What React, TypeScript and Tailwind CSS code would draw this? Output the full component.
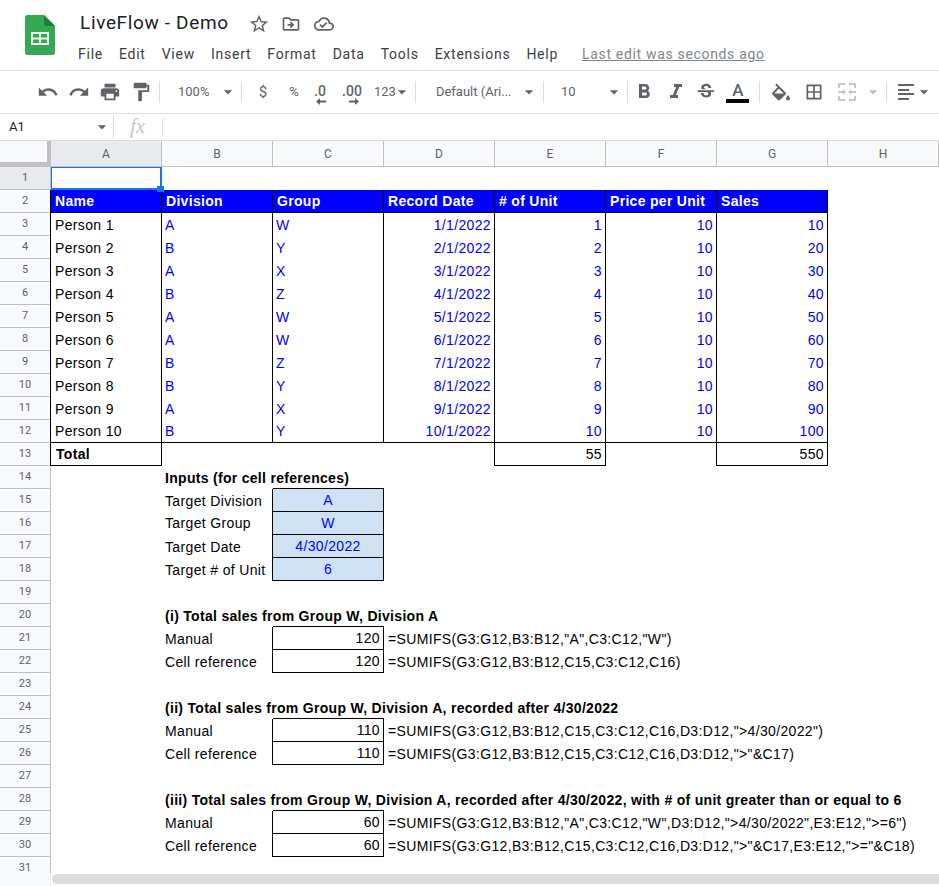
import React from "react";
import clsx from "clsx";
import {
  MdArrowDropDown,
  MdFormatBold,
  MdFormatItalic,
  MdFormatPaint,
  MdOutlineCloudDone,
  MdOutlineDriveFileMove,
  MdPrint,
  MdRedo,
  MdStarBorder,
  MdStrikethroughS,
  MdUndo,
} from "react-icons/md";

type CellSpec = { t?: string; c?: string; bold?: boolean; flat?: boolean } | null;

const menus = ["File", "Edit", "View", "Insert", "Format", "Data", "Tools", "Extensions", "Help"];
const cols = ["A", "B", "C", "D", "E", "F", "G", "H"];

const box = "border-r border-b border-black";
const right = "justify-end pr-[3px]";
const center = "justify-center";
const blue = "text-[#0000ff]";

const people: [string, string, string, string, string, string, string][] = [
  ["Person 1", "A", "W", "1/1/2022", "1", "10", "10"],
  ["Person 2", "B", "Y", "2/1/2022", "2", "10", "20"],
  ["Person 3", "A", "X", "3/1/2022", "3", "10", "30"],
  ["Person 4", "B", "Z", "4/1/2022", "4", "10", "40"],
  ["Person 5", "A", "W", "5/1/2022", "5", "10", "50"],
  ["Person 6", "A", "W", "6/1/2022", "6", "10", "60"],
  ["Person 7", "B", "Z", "7/1/2022", "7", "10", "70"],
  ["Person 8", "B", "Y", "8/1/2022", "8", "10", "80"],
  ["Person 9", "A", "X", "9/1/2022", "9", "10", "90"],
  ["Person 10", "B", "Y", "10/1/2022", "10", "10", "100"],
];

const head = (t: string, extra?: string): CellSpec => ({
  t,
  bold: true,
  c: clsx("border-r border-b border-black bg-[#0000ff] pl-1 text-white", extra),
});

const personRow = (p: string[], i: number): CellSpec[] => {
  const edge = i === 9 ? "border-b border-black" : "";
  return [
    { t: p[0], c: clsx("border-r border-black pl-1 shadow-[-1px_0_0_#000]", edge) },
    { t: p[1], c: clsx("border-r border-black pl-[3px]", blue, edge) },
    { t: p[2], c: clsx("border-r border-black pl-[3px]", blue, edge) },
    { t: p[3], c: clsx("border-r border-black", right, blue, edge) },
    { t: p[4], c: clsx("border-r border-black", right, blue, edge) },
    { t: p[5], c: clsx("border-r border-black", right, blue, edge) },
    { t: p[6], c: clsx("border-r border-black", right, blue, edge) },
    null,
  ];
};

const title = (t: string): CellSpec[] => [
  null,
  { t, bold: true, c: "pl-[3px]" },
  { c: "border-b border-black" },
  null,
  null,
  null,
  null,
  null,
];

const calc = (name: string, v: string, f: string): CellSpec[] => [
  null,
  { t: name, c: "border-r border-black pl-[3px]" },
  { t: v, c: clsx(box, right) },
  { t: f, c: "pl-1" },
  null,
  null,
  null,
  null,
];

const input = (name: string, v: string, flat = false): CellSpec[] => [
  null,
  { t: name, flat, c: "border-r border-black pl-[3px]" },
  { t: v, flat, c: clsx(box, center, blue, "bg-[#cfe2f3]") },
  null,
  null,
  null,
  null,
  null,
];

const empty: CellSpec[] = [null, null, null, null, null, null, null, null];

const rows: CellSpec[][] = [
  [
    { c: "relative z-10 border-t border-r-2 border-b-2 border-l border-[#1a73e8]" },
    null,
    null,
    null,
    null,
    null,
    null,
    null,
  ],
  [
    head("Name", "shadow-[-1px_0_0_#000]"),
    head("Division"),
    head("Group"),
    head("Record Date"),
    head("# of Unit"),
    head("Price per Unit"),
    head("Sales"),
    null,
  ],
  ...people.map(personRow),
  [
    { t: "Total", bold: true, c: clsx(box, "pl-[5px] shadow-[-1px_0_0_#000]") },
    null,
    null,
    { c: "border-r border-black" },
    { t: "55", c: clsx(box, right) },
    { c: "border-r border-black" },
    { t: "550", c: clsx(box, right) },
    null,
  ],
  title("Inputs (for cell references)"),
  input("Target Division", "A"),
  input("Target Group", "W", true),
  input("Target Date", "4/30/2022"),
  input("Target # of Unit", "6"),
  empty,
  title("(i) Total sales from Group W, Division A"),
  calc("Manual", "120", '=SUMIFS(G3:G12,B3:B12,"A",C3:C12,"W")'),
  calc("Cell reference", "120", "=SUMIFS(G3:G12,B3:B12,C15,C3:C12,C16)"),
  empty,
  title("(ii) Total sales from Group W, Division A, recorded after 4/30/2022"),
  calc("Manual", "110", '=SUMIFS(G3:G12,B3:B12,C15,C3:C12,C16,D3:D12,">4/30/2022")'),
  calc("Cell reference", "110", '=SUMIFS(G3:G12,B3:B12,C15,C3:C12,C16,D3:D12,">"&C17)'),
  empty,
  title("(iii) Total sales from Group W, Division A, recorded after 4/30/2022, with # of unit greater than or equal to 6"),
  calc("Manual", "60", '=SUMIFS(G3:G12,B3:B12,"A",C3:C12,"W",D3:D12,">4/30/2022",E3:E12,">=6")'),
  calc("Cell reference", "60", '=SUMIFS(G3:G12,B3:B12,C15,C3:C12,C16,D3:D12,">"&C17,E3:E12,">="&C18)'),
  empty,
];

const Logo = () => (
  <svg width="30" height="40" viewBox="0 0 30 40">
    <path d="M2.500 0H19l11 11v26.500a2.500 2.500 0 0 1-2.500 2.500h-25A2.500 2.500 0 0 1 0 37.500V2.500A2.500 2.500 0 0 1 2.500 0z" fill="#34a853" />
    <path d="M19 0l11 11H21.500A2.500 2.500 0 0 1 19 8.500z" fill="#188038" />
    <path d="M6 17h18v13H6zm2 2v3.500h6V19zm8 0v3.500h6V19zm-8 5.500V28h6v-3.500zm8 0V28h6v-3.500z" fill="#fff" fillOpacity="0.9" fillRule="evenodd" />
  </svg>
);

const Sep = ({ ml }: { ml: string }) => <div className={clsx("h-[22px] w-px shrink-0 bg-[#dadce0]", ml)} />;

const Caret = ({ className }: { className?: string }) => (
  <MdArrowDropDown className={clsx("shrink-0 text-[#5f6368]", className)} size={20} />
);

const Slot = ({ w, children, className }: { w: string; children: React.ReactNode; className?: string }) => (
  <div className={clsx("flex shrink-0 items-center justify-center", w, className)}>{children}</div>
);

const MergeIcon = () => (
  <svg width="18" height="18" viewBox="0 0 18 18" fill="#c4c7cb">
    <path d="M0 0h7v2H2v3H0zM11 0h7v5h-2V2h-5zM0 13h2v3h5v2H0zM16 13h2v5h-7v-2h5zM0 8h5V6l3 3-3 3v-2H0zM18 8h-5V6l-3 3 3 3v-2h5z" />
  </svg>
);

const FillIcon = () => (
  <svg width="22" height="19" viewBox="0 0 22 18" fill="currentColor">
    <path d="M16.560 8.940L7.620 0 6.210 1.410l2.380 2.380-5.150 5.150c-.59.59-.59 1.540 0 2.120l5.500 5.500c.29.29.68.44 1.060.44s.77-.15 1.060-.44l5.500-5.500c.59-.58.59-1.530 0-2.120zM5.210 10L10 5.210 14.790 10H5.210zM19 11.500s-2 2.170-2 3.500c0 1.100.9 2 2 2s2-.9 2-2c0-1.330-2-3.500-2-3.500z" />
  </svg>
);

const BordersIcon = () => (
  <svg width="20" height="20" viewBox="0 0 24 24" fill="currentColor">
    <path d="M3 3v18h18V3H3zm8 16H5v-6h6v6zm0-8H5V5h6v6zm8 8h-6v-6h6v6zm0-8h-6V5h6v6z" />
  </svg>
);

const AlignIcon = () => (
  <svg width="16" height="16" viewBox="0 0 16 16" fill="currentColor">
    <path d="M0 0h16v2H0zM0 5h11v2H0zM0 9h16v2H0zM0 14h11v2H0z" />
  </svg>
);

const ArrowIcon = ({ flip }: { flip?: boolean }) => (
  <svg width="10" height="7" viewBox="0 0 10 7" fill="currentColor" className={clsx("absolute top-[15px]", flip ? "left-[13px] rotate-180" : "left-[12px]")}>
    <path d="M0 3.500L4 0v2.500h6v2H4V7z" />
  </svg>
);

const Toolbar = () => (
  <div className="flex h-[43px] items-center border-b border-[#dadce0] text-[#5f6368]">
    <Slot w="w-[32px]" className="ml-[32px]"><MdUndo size={22} /></Slot>
    <Slot w="w-[30px]"><MdRedo size={22} /></Slot>
    <Slot w="w-[31px]"><MdPrint size={22} /></Slot>
    <Slot w="w-[31px]"><MdFormatPaint size={22} /></Slot>
    <Sep ml="ml-[3px]" />
    <span className="ml-[18px] w-[40px] text-[13px]">100%</span>
    <Caret />
    <Sep ml="ml-[3px]" />
    <Slot w="w-[42px]" className="text-[15px]">$</Slot>
    <Slot w="w-[20px]" className="text-[13px]">%</Slot>
    <Slot w="w-[32px]" className="relative text-[14px] font-medium">
      <span className="-mt-[2px]">.0</span>
      <ArrowIcon />
    </Slot>
    <Slot w="w-[32px]" className="relative text-[14px] font-medium">
      <span className="-mt-[2px]">.00</span>
      <ArrowIcon flip />
    </Slot>
    <span className="ml-[6px] text-[13px]">123</span>
    <Caret className="-ml-[4px]" />
    <Sep ml="ml-[3px]" />
    <span className="ml-[20px] w-[85px] text-[13px]">Default (Ari...</span>
    <Caret className="-ml-[2px]" />
    <Sep ml="ml-[4px]" />
    <span className="ml-[17px] w-[44px] text-[13px]">10</span>
    <Caret className="-ml-[1px]" />
    <Sep ml="ml-[3px]" />
    <Slot w="w-[37px]" className="-ml-[2px]"><MdFormatBold size={24} /></Slot>
    <Slot w="w-[24px]" className="ml-[1px]"><MdFormatItalic size={24} /></Slot>
    <Slot w="w-[36px]"><MdStrikethroughS size={22} /></Slot>
    <Slot w="w-[28px]" className="relative flex-col">
      <span className="text-[17px] leading-[18px] font-medium">A</span>
      <span className="h-[4px] w-[23px] bg-black" />
    </Slot>
    <Sep ml="ml-[7px]" />
    <Slot w="w-[40px]"><FillIcon /></Slot>
    <Slot w="w-[26px]" className="ml-[1px]"><BordersIcon /></Slot>
    <Slot w="w-[40px]"><MergeIcon /></Slot>
    <Caret className="-ml-[4px] opacity-40" />
    <Sep ml="ml-[3px]" />
    <Slot w="w-[38px]"><AlignIcon /></Slot>
    <Caret className="-ml-[11px]" />
  </div>
);

const Cell = ({ spec }: { spec: CellSpec }) => (
  <div
    className={clsx(
      "flex h-[23px] w-[111px] shrink-0 items-center text-[14px] whitespace-nowrap",
      spec?.bold ? "font-bold tracking-[0.3px]" : "tracking-[0.35px]",
      !spec?.flat && "pt-[1px]",
      spec?.c,
    )}
  >
    {spec?.t}
  </div>
);

export default function App() {
  return (
    <div className="relative h-[886px] w-[939px] overflow-hidden bg-white font-['Roboto',sans-serif] text-black">
      <header className="flex h-[71px] border-b border-[#dadce0]">
        <div className="w-[78px] shrink-0 pt-[15px] pl-[25px]">
          <Logo />
        </div>
        <div className="flex flex-col pt-[11px]">
          <div className="flex items-center pl-[2px]">
            <span className="w-[168px] text-[19px] leading-[24px] tracking-[0.65px] text-[#202124]">LiveFlow - Demo</span>
            <MdStarBorder size={22} className="mt-[1px] text-[#5f6368]" />
            <MdOutlineDriveFileMove size={20} className="mt-[1px] ml-[11px] text-[#5f6368]" />
            <MdOutlineCloudDone size={20} className="mt-[1px] ml-[13px] text-[#5f6368]" />
          </div>
          <nav className="mt-[9px] flex items-center gap-[16px] text-[14px] leading-[20px] tracking-[0.75px] text-[#3c4043]">
            {menus.map((m) => (
              <span key={m}>{m}</span>
            ))}
            <span className="ml-[8px] tracking-[0.67px] text-[#80868b] underline">Last edit was seconds ago</span>
          </nav>
        </div>
      </header>
      <Toolbar />
      <div className="flex h-[27px] items-center border-b border-[#dadce0]">
        <span className="ml-[9px] w-[83px] text-[13px] text-[#202124]">A1</span>
        <Caret />
        <div className="ml-[1px] h-[22px] w-px bg-[#dadce0]" />
        <span className="ml-[16px] w-[32px] font-['Liberation_Serif',serif] text-[21px] text-[#c4c7cb] italic">fx</span>
        <div className="h-[18px] w-px bg-[#dadce0]" />
      </div>
      <div className="flex h-[26px] border-b border-[#c0c0c0] bg-[#f8f9fa] text-[12px] text-[#5f6368]">
        <div className="h-[25px] w-[51px] shrink-0 border-r-4 border-b-4 border-[#c0c0c0]" />
        {cols.map((c) => (
          <div
            key={c}
            className={clsx(
              "flex w-[111px] shrink-0 items-center justify-center border-r border-[#c0c0c0]",
              c === "A" && "bg-[#e8eaed]",
            )}
          >
            {c}
          </div>
        ))}
      </div>
      <div className="h-[706px] overflow-hidden font-['Liberation_Sans',sans-serif]">
        {rows.map((row, i) => (
          <div key={i} className="flex">
            <div
              className={clsx(
                "flex h-[23px] w-[51px] shrink-0 items-center justify-center border-r border-b border-[#c0c0c0] font-['Roboto',sans-serif] text-[11px] text-[#5f6368]",
                i === 0 ? "bg-[#e8eaed]" : "bg-[#f8f9fa]",
              )}
            >
              {i + 1}
            </div>
            {row.map((spec, j) => (
              <Cell key={j} spec={spec} />
            ))}
          </div>
        ))}
      </div>
      <span className="absolute top-[186px] left-[157px] z-20 h-[6px] w-[7px] bg-[#1a73e8]" />
      <div className="flex h-[13px] bg-white">
        <div className="h-[13px] w-[51px] shrink-0 border-r border-[#e8eaed] bg-[#f8f9fa]" />
        <div className="mt-[1px] ml-[1px] h-[10px] flex-1 rounded-l-[5px] bg-[#dadce0]" />
      </div>
    </div>
  );
}
